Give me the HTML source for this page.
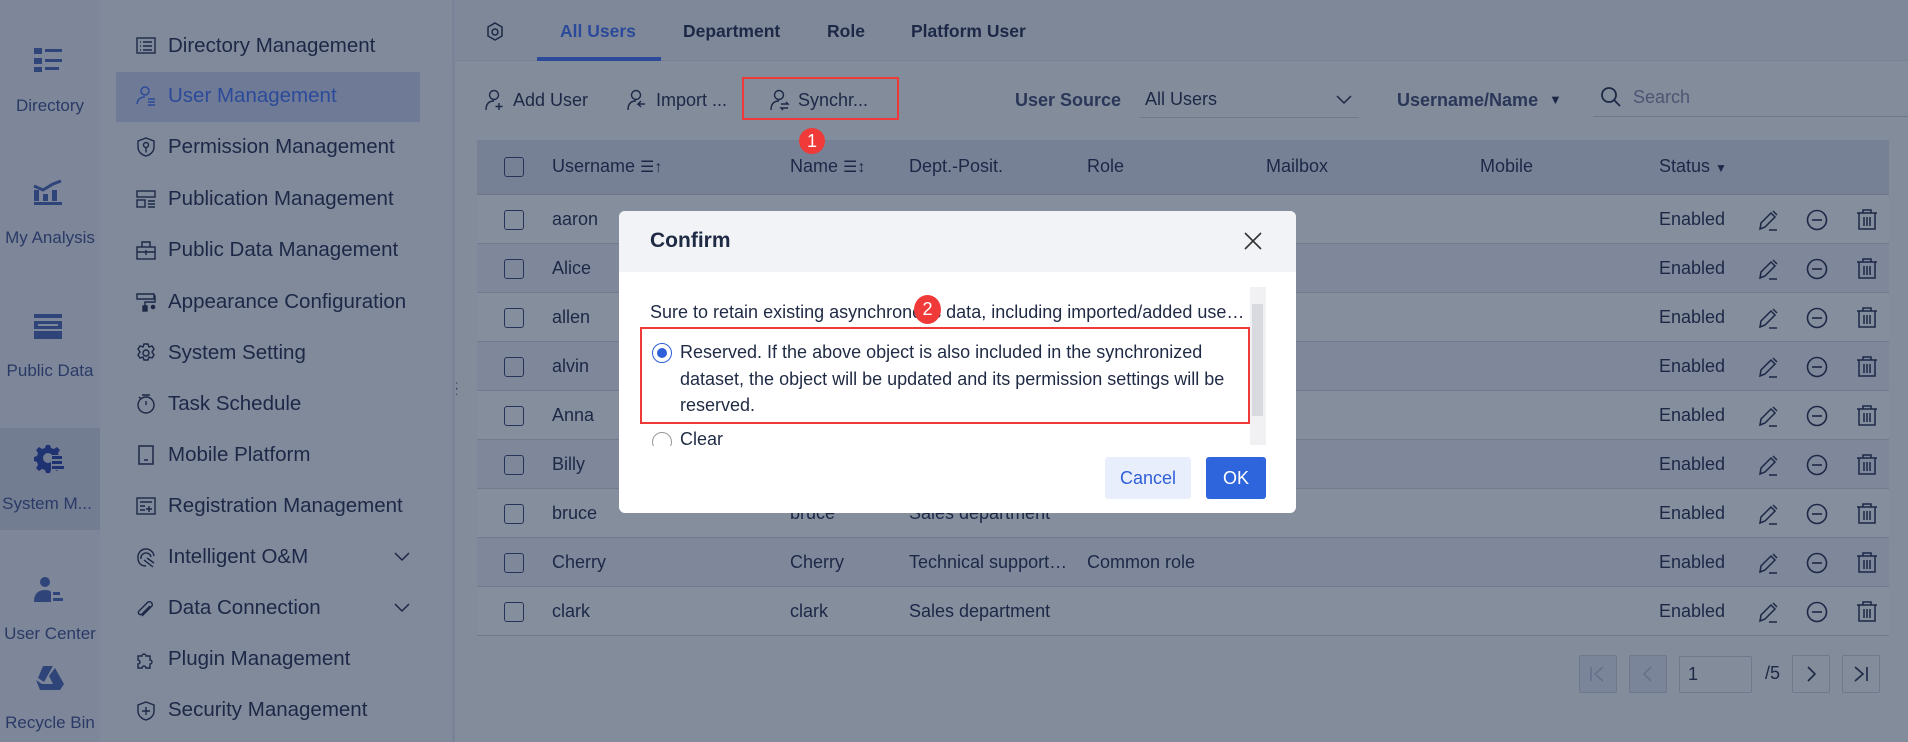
<!DOCTYPE html>
<html><head><meta charset="utf-8"><style>
*{box-sizing:border-box;margin:0;padding:0}
body{width:1908px;height:742px;overflow:hidden;background:#838c9b;font-family:"Liberation Sans",sans-serif;color:#1c2846;position:relative}
.a{position:absolute;white-space:nowrap}
.rail{left:0;top:0;width:100px;height:742px;background:#7e8799}
.rl{width:100px;text-align:center;font-size:17px;color:#2a3a66}
.side{left:100px;top:0;width:353px;height:742px;background:#818a9b;border-right:1px solid #788196}
.si{left:168px;font-size:20.5px;color:#1c2846;line-height:24px}
.sic{left:136px;width:20px;height:20px}
svg{overflow:visible}
.tab{font-size:17.5px;font-weight:bold;top:21px}
.th{font-size:18px;top:156px}
.row{left:477px;width:1412px;height:49px;border-bottom:1px solid #717b90}
.cb{left:504px;width:20px;height:20px;border:1.5px solid #27345a;border-radius:3px}
.t{font-size:18px}
.pg{width:38px;height:38px;border:1px solid #6f798e;border-radius:2px;top:655px}
</style></head><body>
<!-- rail -->
<div class="a rail"></div>
<div class="a" style="left:0;top:428px;width:100px;height:102px;background:#737d92"></div>
<svg class="a" style="left:34px;top:48px" width="30" height="26"><g fill="#2f4478"><rect x="0" y="0" width="8" height="6"/><rect x="11" y="1" width="17" height="3"/><rect x="0" y="10" width="8" height="6"/><rect x="11" y="11" width="17" height="3"/><rect x="11" y="19" width="14" height="3"/><rect x="0" y="19" width="8" height="5"/></g></svg>
<div class="a rl" style="top:96px">Directory</div>
<svg class="a" style="left:34px;top:180px" width="30" height="26"><g fill="#2f4478"><rect x="0" y="22" width="28" height="3"/><rect x="0" y="10" width="5" height="11"/><rect x="9" y="14" width="5" height="7"/><rect x="18" y="10" width="5" height="11"/><path d="M0 6 L9 10 L19 4 L27 1" stroke="#2f4478" stroke-width="3" fill="none"/></g></svg>
<div class="a rl" style="top:228px">My Analysis</div>
<svg class="a" style="left:34px;top:314px" width="30" height="26"><g fill="#2f4478"><rect x="0" y="0" width="28" height="4"/><rect x="0" y="7" width="28" height="8"/><rect x="0" y="17" width="28" height="8"/></g><rect x="4" y="10" width="20" height="2" fill="#7e8799"/></svg>
<div class="a rl" style="top:361px">Public Data</div>
<svg class="a" style="left:34px;top:444px" width="30" height="28"><path d="M12 1h4l1 3 3 1 3-2 3 3-2 3 1 3 3 1v4l-3 1-1 3 2 3-3 3-3-2-3 1-1 3h-4l-1-3-3-1-3 2-3-3 2-3-1-3-3-1v-4l3-1 1-3-2-3 3-3 3 2 3-1z" fill="#1f3372"/><circle cx="14" cy="14" r="5" fill="#737d92"/><rect x="17" y="11" width="13" height="15" fill="#737d92"/><g fill="#1f3372"><rect x="18" y="12" width="10" height="3"/><rect x="18" y="17" width="10" height="3"/><rect x="18" y="22" width="12" height="3"/></g></svg>
<div class="a rl" style="top:494px;left:-6px;width:106px">System M...</div>
<svg class="a" style="left:34px;top:576px" width="30" height="28"><circle cx="11" cy="6" r="5" fill="#2f4478"/><path d="M0 26 Q0 14 11 14 Q16 14 17 16 V26Z" fill="#2f4478"/><g fill="#2f4478"><rect x="19" y="16" width="7" height="3"/><rect x="19" y="22" width="10" height="3"/></g></svg>
<div class="a rl" style="top:624px">User Center</div>
<svg class="a" style="left:33px;top:666px" width="32" height="24"><path d="M10 0h10l-9 16-6-4zM22 2l9 16H20l-4-8zM3 14l6 4h22l-4 6H7z" fill="#2f4478"/></svg>
<div class="a rl" style="top:713px">Recycle Bin</div>

<!-- side -->
<div class="a side"></div>
<div class="a" style="left:116px;top:72px;width:304px;height:50px;background:#6f7b96"></div>
<div class="a" style="left:452px;top:0;width:3px;height:742px;background:#7a8398"></div>
<div class="a" style="left:455px;top:382px;font-size:12px;line-height:6px;color:#3a466a">:<br>:</div>
<svg class="a sic" style="top:36px" viewBox="0 0 20 20"><g stroke="#1c2846" stroke-width="1.4" fill="none"><rect x="1" y="2" width="18" height="15"/><path d="M4 6h1M7 6h9M4 10h1M7 10h9M4 14h1M7 14h9"/></g></svg>
<div class="a si" style="top:34px">Directory Management</div>
<svg class="a sic" style="top:86px" viewBox="0 0 20 20"><g stroke="#2c4a9a" stroke-width="1.5" fill="none"><circle cx="9" cy="5" r="4"/><path d="M1 18q1-7 8-7M12 13h7M12 16h7M12 19h7"/></g></svg>
<div class="a si" style="top:84px;color:#2c4a9a">User Management</div>
<svg class="a sic" style="top:137px" viewBox="0 0 20 20"><g stroke="#1c2846" stroke-width="1.4" fill="none"><path d="M10 1l8 3v6c0 5-4 8-8 9-4-1-8-4-8-9V4z"/><circle cx="10" cy="8" r="2.5"/><path d="M10 10.5v5"/></g></svg>
<div class="a si" style="top:135px">Permission Management</div>
<svg class="a sic" style="top:189px" viewBox="0 0 20 20"><g stroke="#1c2846" stroke-width="1.4" fill="none"><rect x="1" y="2" width="18" height="6"/><rect x="1" y="11" width="8" height="7"/><path d="M12 12h7M12 15h7M12 18h7"/></g></svg>
<div class="a si" style="top:187px">Publication Management</div>
<svg class="a sic" style="top:240px" viewBox="0 0 20 20"><g stroke="#1c2846" stroke-width="1.4" fill="none"><rect x="1" y="7" width="18" height="12"/><path d="M6 7V2h8v5M1 12h18M10 10v5"/></g></svg>
<div class="a si" style="top:238px">Public Data Management</div>
<svg class="a sic" style="top:292px" viewBox="0 0 20 20"><g stroke="#1c2846" stroke-width="1.4" fill="#1c2846"><path d="M1 2h17v5H1zM18 4h1v6H9v4" fill="none"/><rect x="7" y="14" width="4" height="5"/><circle cx="17" cy="15" r="1.6"/></g></svg>
<div class="a si" style="top:290px">Appearance Configuration</div>
<svg class="a sic" style="top:343px" viewBox="0 0 20 20"><g stroke="#1c2846" stroke-width="1.4" fill="none"><path d="M8 1h4l1 3 3-1 2 3-2 3 2 3-2 3-3-1-1 3H8l-1-3-3 1-2-3 2-3-2-3 2-3 3 1z"/><circle cx="10" cy="10" r="3"/></g></svg>
<div class="a si" style="top:341px">System Setting</div>
<svg class="a sic" style="top:394px" viewBox="0 0 20 20"><g stroke="#1c2846" stroke-width="1.4" fill="none"><circle cx="10" cy="11" r="8"/><path d="M10 11V7M6 1h8M3 3l2 2"/></g></svg>
<div class="a si" style="top:392px">Task Schedule</div>
<svg class="a sic" style="top:445px" viewBox="0 0 20 20"><g stroke="#1c2846" stroke-width="1.5" fill="none"><rect x="3" y="1" width="14" height="18"/><path d="M8 15h4"/></g></svg>
<div class="a si" style="top:443px">Mobile Platform</div>
<svg class="a sic" style="top:496px" viewBox="0 0 20 20"><g stroke="#1c2846" stroke-width="1.4" fill="none"><rect x="1" y="2" width="18" height="16"/><path d="M4 6h12M4 10h5M4 14h5M13 10v6M10 13h6"/></g></svg>
<div class="a si" style="top:494px">Registration Management</div>
<svg class="a sic" style="top:548px" viewBox="0 0 20 20"><g stroke="#1c2846" stroke-width="1.4" fill="none"><path d="M2 10a8 8 0 0 1 16-2M5 11a5 5 0 0 1 10-2M8 12l9 7M11 10l7 5"/><path d="M2 10c0 5 3 8 8 8"/></g></svg>
<div class="a si" style="top:545px">Intelligent O&amp;M</div>
<svg class="a" style="left:394px;top:552px" width="16" height="10"><path d="M1 1l7 7 7-7" stroke="#1c2846" stroke-width="1.5" fill="none"/></svg>
<svg class="a sic" style="top:599px" viewBox="0 0 20 20"><g stroke="#1c2846" stroke-width="1.4" fill="none"><path d="M6 17L16 7a3 3 0 0 0-4-4L3 12a2 2 0 0 0 3 3l8-8"/></g></svg>
<div class="a si" style="top:596px">Data Connection</div>
<svg class="a" style="left:394px;top:603px" width="16" height="10"><path d="M1 1l7 7 7-7" stroke="#1c2846" stroke-width="1.5" fill="none"/></svg>
<svg class="a sic" style="top:650px" viewBox="0 0 20 20"><g stroke="#1c2846" stroke-width="1.4" fill="none"><path d="M2 6h4a2 2 0 0 1 4 0h4v4a2 2 0 0 1 0 4v4H10a2 2 0 0 0-4 0H2v-4a2 2 0 0 0 0-4z"/></g></svg>
<div class="a si" style="top:647px">Plugin Management</div>
<svg class="a sic" style="top:701px" viewBox="0 0 20 20"><g stroke="#1c2846" stroke-width="1.4" fill="none"><path d="M10 1l8 3v6c0 5-4 8-8 9-4-1-8-4-8-9V4z"/><path d="M10 6v8M6 10h8"/></g></svg>
<div class="a si" style="top:698px">Security Management</div>

<!-- top tabs -->
<div class="a" style="left:455px;top:0;width:1453px;height:61px;background:#7f8899;border-bottom:1px solid #778196"></div>
<svg class="a" style="left:485px;top:22px" width="20" height="20" viewBox="0 0 20 20"><g stroke="#1c2846" stroke-width="1.5" fill="none"><path d="M10 1l7 4v9l-7 4-7-4V5z"/><circle cx="10" cy="10" r="3"/></g></svg>
<div class="a tab" style="left:560px;color:#2c4a9a">All Users</div>
<div class="a" style="left:537px;top:57px;width:124px;height:4px;background:#2c4a9a"></div>
<div class="a tab" style="left:683px">Department</div>
<div class="a tab" style="left:827px">Role</div>
<div class="a tab" style="left:911px">Platform User</div>

<!-- toolbar -->
<svg class="a" style="left:485px;top:89px" width="20" height="22" viewBox="0 0 20 22"><g stroke="#1c2846" stroke-width="1.4" fill="none"><circle cx="9" cy="6" r="4.5"/><path d="M1 21q0-9 8-9M14 14v7M10.5 17.5h7"/></g></svg>
<div class="a t" style="left:513px;top:90px">Add User</div>
<svg class="a" style="left:627px;top:89px" width="20" height="22" viewBox="0 0 20 22"><g stroke="#1c2846" stroke-width="1.4" fill="none"><circle cx="9" cy="6" r="4.5"/><path d="M1 21q0-9 8-9M18 15h-7l3-3M11 15l3 3"/></g></svg>
<div class="a t" style="left:656px;top:90px">Import ...</div>
<svg class="a" style="left:770px;top:89px" width="20" height="22" viewBox="0 0 20 22"><g stroke="#1c2846" stroke-width="1.4" fill="none"><circle cx="9" cy="6" r="4.5"/><path d="M1 21q0-9 8-9M11 15h7l-2-2M18 19h-7l2 2"/></g></svg>
<div class="a t" style="left:798px;top:90px">Synchr...</div>
<div class="a" style="left:742px;top:77px;width:157px;height:43px;border:2.5px solid #f03a3a"></div>

<div class="a t" style="left:1015px;top:90px;font-weight:bold;color:#2a3758">User Source</div>
<div class="a t" style="left:1145px;top:89px">All Users</div>
<svg class="a" style="left:1336px;top:95px" width="16" height="10"><path d="M1 1l7 7 7-7" stroke="#1c2846" stroke-width="1.5" fill="none"/></svg>
<div class="a" style="left:1140px;top:117px;width:219px;height:1px;background:#6f798e"></div>
<div class="a t" style="left:1397px;top:90px;font-weight:bold;color:#2a3758">Username/Name</div>
<div class="a" style="left:1549px;top:92px;font-size:13px">▼</div>
<svg class="a" style="left:1600px;top:86px" width="22" height="22"><g stroke="#1c2846" stroke-width="1.8" fill="none"><circle cx="9" cy="9" r="7"/><path d="M14 14l6 6"/></g></svg>
<div class="a t" style="left:1633px;top:87px;color:#4c5673">Search</div>
<div class="a" style="left:1593px;top:116px;width:315px;height:1px;background:#6f798e"></div>

<!-- table -->
<div class="a" style="left:477px;top:140px;width:1412px;height:55px;background:#778196;border-bottom:1px solid #6d778c"></div>
<div class="a cb" style="top:157px"></div>
<div class="a th" style="left:552px">Username <span style="font-size:16px">☰↑</span></div>
<div class="a th" style="left:790px">Name <span style="font-size:16px">☰↕</span></div>
<div class="a th" style="left:909px">Dept.-Posit.</div>
<div class="a th" style="left:1087px">Role</div>
<div class="a th" style="left:1266px">Mailbox</div>
<div class="a th" style="left:1480px">Mobile</div>
<div class="a th" style="left:1659px">Status <span style="font-size:12px">▼</span></div>
<div class="a" style="left:799px;top:128px;width:26px;height:26px;border-radius:50%;background:#f03a3a;color:#fff;font-size:18px;text-align:center;line-height:26px">1</div>

<div class="a row" style="top:195px;background:#858e9d"></div>
<div class="a row" style="top:244px;background:#7f889a"></div>
<div class="a row" style="top:293px;background:#858e9d"></div>
<div class="a row" style="top:342px;background:#7f889a"></div>
<div class="a row" style="top:391px;background:#858e9d"></div>
<div class="a row" style="top:440px;background:#7f889a"></div>
<div class="a row" style="top:489px;background:#858e9d"></div>
<div class="a row" style="top:538px;background:#7f889a"></div>
<div class="a row" style="top:587px;background:#858e9d"></div>

<div id="rows"></div>
<script>
var names=[["aaron","",""],["Alice","",""],["allen","",""],["alvin","",""],["Anna","",""],["Billy","",""],["bruce","bruce","Sales department"],["Cherry","Cherry","Technical support…","Common role"],["clark","clark","Sales department"]];
var h="";
for(var i=0;i<9;i++){var y=195+i*49;var r=names[i];
h+='<div class="a cb" style="top:'+(y+15)+'px"></div>';
h+='<div class="a t" style="left:552px;top:'+(y+14)+'px">'+r[0]+'</div>';
if(r[1])h+='<div class="a t" style="left:790px;top:'+(y+14)+'px">'+r[1]+'</div>';
if(r[2])h+='<div class="a t" style="left:909px;top:'+(y+14)+'px">'+r[2]+'</div>';
if(r[3])h+='<div class="a t" style="left:1087px;top:'+(y+14)+'px">'+r[3]+'</div>';
h+='<div class="a t" style="left:1659px;top:'+(y+14)+'px">Enabled</div>';
h+='<svg class="a" style="left:1757px;top:'+(y+14)+'px" width="22" height="22" viewBox="0 0 22 22"><g stroke="#1c2846" stroke-width="1.5" fill="none"><path d="M3 20l1-6L14 4l4 4L8 18zM16 2l4 4M12 21h8"/></g></svg>';
h+='<svg class="a" style="left:1806px;top:'+(y+14)+'px" width="22" height="22"><g stroke="#1c2846" stroke-width="1.6" fill="none"><circle cx="11" cy="11" r="9.5"/><path d="M6 11h10"/></g></svg>';
h+='<svg class="a" style="left:1856px;top:'+(y+13)+'px" width="22" height="22"><g stroke="#1c2846" stroke-width="1.5" fill="none"><path d="M1 5h20M7 5V2h8v3M3 5v16h16V5M8 9v9M11 9v9M14 9v9M3 21h16"/></g></svg>';
}
document.getElementById("rows").innerHTML=h;
</script>

<!-- pagination -->
<div class="a pg" style="left:1579px;background:#7b8599"></div>
<svg class="a" style="left:1589px;top:666px" width="18" height="16"><path d="M2 1v14M14 1L6 8l8 7" stroke="#66718a" stroke-width="1.6" fill="none"/></svg>
<div class="a pg" style="left:1629px;background:#7b8599"></div>
<svg class="a" style="left:1641px;top:666px" width="14" height="16"><path d="M10 1L3 8l7 7" stroke="#66718a" stroke-width="1.6" fill="none"/></svg>
<div class="a" style="left:1679px;top:656px;width:73px;height:37px;border:1px solid #6f798e;border-radius:2px;font-size:18px;padding:7px 0 0 8px">1</div>
<div class="a t" style="left:1765px;top:663px">/5</div>
<div class="a pg" style="left:1792px"></div>
<svg class="a" style="left:1804px;top:666px" width="14" height="16"><path d="M4 1l7 7-7 7" stroke="#1c2846" stroke-width="1.6" fill="none"/></svg>
<div class="a pg" style="left:1842px"></div>
<svg class="a" style="left:1852px;top:666px" width="18" height="16"><path d="M3 1l8 7-8 7M15 1v14" stroke="#1c2846" stroke-width="1.6" fill="none"/></svg>

<!-- dialog -->
<div class="a" style="left:619px;top:211px;width:677px;height:302px;background:#fff;border-radius:6px;overflow:hidden">
  <div class="a" style="left:0;top:0;width:677px;height:61px;background:#f2f3f7"></div>
  <div class="a" style="left:31px;top:18px;font-size:21px;font-weight:bold;color:#1f2a44">Confirm</div>
  <svg class="a" style="left:625px;top:21px" width="18" height="18"><path d="M1 1l16 16M17 1L1 17" stroke="#333" stroke-width="1.6"/></svg>
  <div class="a" style="left:0;top:76px;width:660px;height:159px;overflow:hidden">
    <div class="a" style="left:31px;top:15px;font-size:18px;color:#1f2a44">Sure to retain existing asynchronous data, including imported/added use…</div>
    <div class="a" style="left:33px;top:56px;width:20px;height:20px;border:1.5px solid #2f5fd8;border-radius:50%"></div>
    <div class="a" style="left:38px;top:61px;width:10px;height:10px;background:#2f5fd8;border-radius:50%"></div>
    <div class="a" style="left:61px;top:52px;font-size:18px;line-height:26.5px;color:#1f2a44;white-space:normal;width:565px">Reserved. If the above object is also included in the synchronized dataset, the object will be updated and its permission settings will be reserved.</div>
    <div class="a" style="left:33px;top:145px;width:20px;height:20px;border:1.2px solid #999;border-radius:50%"></div>
    <div class="a" style="left:61px;top:142px;font-size:18px;color:#1f2a44">Clear</div>
  </div>
  <div class="a" style="left:631px;top:76px;width:16px;height:158px;background:#f1f1f3"></div>
  <div class="a" style="left:633px;top:93px;width:11px;height:112px;background:#d9dadf"></div>
  <div class="a" style="left:486px;top:246px;width:86px;height:42px;background:#e8eefb;border-radius:3px;color:#2f5fd8;font-size:18px;text-align:center;line-height:42px">Cancel</div>
  <div class="a" style="left:587px;top:246px;width:60px;height:42px;background:#2f65dc;border-radius:3px;color:#fff;font-size:18px;text-align:center;line-height:42px">OK</div>
</div>
<div class="a" style="left:640px;top:327px;width:610px;height:97px;border:2.5px solid #f03a3a"></div>
<div class="a" style="left:914px;top:295px;width:27px;height:29px;border-radius:50%;background:#f03a3a;color:#fff;font-size:18px;text-align:center;line-height:29px">2</div>
</body></html>
